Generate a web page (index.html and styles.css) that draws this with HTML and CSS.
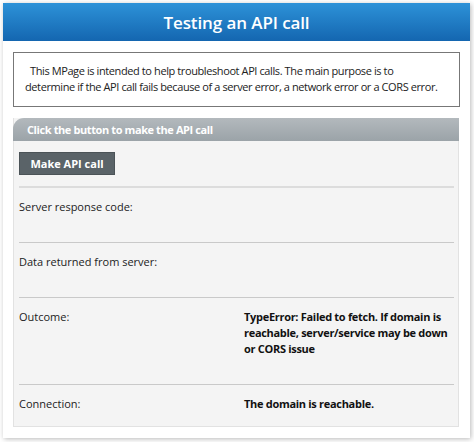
FILE: index.html
```html
<!DOCTYPE html>
<html lang="en">
<head>
<meta charset="utf-8">
<title>Testing an API call</title>
<link rel="stylesheet" href="styles.css">
</head>
<body>
<div class="card">
  <header class="title-bar"><h1>Testing an API call</h1></header>
  <div class="content">
    <p class="intro">This MPage is intended to help troubleshoot API calls. The main purpose is to<br>determine if the API call fails because of a server error, a network error or a CORS error.</p>
    <section class="panel">
      <div class="panel-head">Click the button to make the API call</div>
      <div class="panel-body">
        <div class="btn-row"><button class="btn" type="button">Make API call</button></div>
        <div class="row row-tall"><div class="label">Server response code:</div><div class="value"></div></div>
        <div class="row row-tall"><div class="label">Data returned from server:</div><div class="value"></div></div>
        <div class="row row-outcome"><div class="label">Outcome:</div><div class="value">TypeError: Failed to fetch. If domain is reachable, server/service may be down or CORS issue</div></div>
        <div class="row row-last"><div class="label">Connection:</div><div class="value">The domain is reachable.</div></div>
      </div>
    </section>
  </div>
</div>
</body>
</html>
```
FILE: styles.css
```css
* { box-sizing: border-box; }
html, body { margin: 0; padding: 0; background: #ffffff; }
body {
  font-family: "Open Sans", "Noto Sans", sans-serif;
  font-size: 11px;
  color: #222;
  padding: 3px 4px 4px 3px;
}
.card {
  width: 467px;
  height: 435px;
  background: #fff;
  box-shadow: 1px 1px 5px rgba(0,0,0,0.28);
  display: flex;
  flex-direction: column;
}
.title-bar {
  height: 38px;
  background: linear-gradient(#2d92d8, #1466b0);
  display: flex;
  align-items: center;
  justify-content: center;
}
.title-bar h1 {
  margin: 0;
  color: #fff;
  font-size: 17px;
  font-weight: 600;
  line-height: 1;
  letter-spacing: -0.1px;
}
.content {
  padding: 11px 10px 0 10px;
  display: flex;
  flex-direction: column;
}
.intro {
  margin: 0;
  border: 1px solid #777;
  padding: 10px 4px 10px 11px;
  text-indent: 5px;
  line-height: 16px;
  letter-spacing: -0.4px;
  white-space: nowrap;
  height: 55px;
  color: #222;
}
.panel {
  margin-top: 11px;
  width: 446px;
  height: 309px;
  background: #f4f4f4;
  border: 1px solid #e2e2e2;
  border-top: 0;
  display: flex;
  flex-direction: column;
}
.panel-head {
  height: 23px;
  margin: 0 -1px;
  background: linear-gradient(#b3b9bd, #9ba3a8);
  border-top-left-radius: 11px;
  color: #fff;
  font-weight: 700;
  letter-spacing: -0.4px;
  padding-left: 14px;
  display: flex;
  align-items: center;
}
.panel-body {
  padding: 0 4px 0 5px;
  display: flex;
  flex-direction: column;
}
.btn-row {
  padding: 11px 0 11px 0;
  border-bottom: 2px solid #dcdcdc;
}
.btn {
  font-family: inherit;
  font-size: 11px;
  font-weight: 700;
  color: #fff;
  background: #5a6368;
  border: 1px solid #4b5357;
  width: 96px;
  height: 23px;
  padding: 0;
  cursor: pointer;
}
.row {
  display: grid;
  grid-template-columns: 225px 1fr;
  padding-top: 11px;
  line-height: 16px;
  border-bottom: 1px solid #c9c9c9;
}
.row-tall { height: 55px; }
.row-outcome { height: 87px; }
.row-last { border-bottom: 0; height: 40px; }
.value {
  font-weight: 700;
  color: #111;
  padding-right: 0;
  font-size: 11px;
  letter-spacing: -0.3px;
}
```
